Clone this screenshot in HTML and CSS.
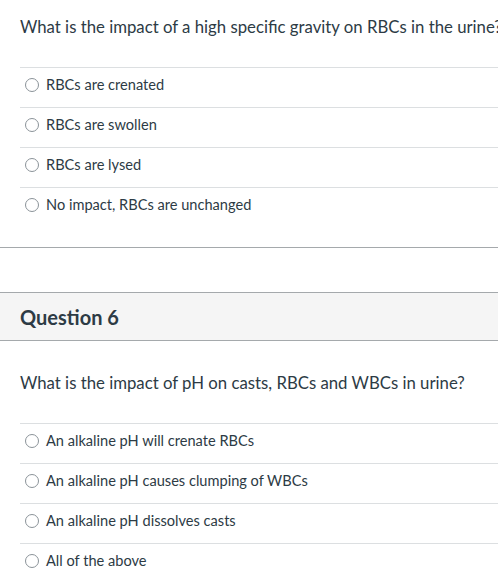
FILE: index.html
```html
<!DOCTYPE html>
<html>
<head>
<meta charset="utf-8">
<link rel="stylesheet" href="styles.css">
</head>
<body>
<div class="page">
  <section class="question">
    <div class="q-body">
      <p class="q-text">What is the impact of a high specific gravity on RBCs in the urine?</p>
      <ul class="answers">
        <li class="answer"><span class="radio"></span><span class="label">RBCs are crenated</span></li>
        <li class="answer"><span class="radio"></span><span class="label">RBCs are swollen</span></li>
        <li class="answer"><span class="radio"></span><span class="label">RBCs are lysed</span></li>
        <li class="answer"><span class="radio"></span><span class="label">No impact, RBCs are unchanged</span></li>
      </ul>
    </div>
    <div class="q-end"></div>
  </section>

  <section class="question second">
    <header class="q-header"><h2>Question 6</h2></header>
    <div class="q-body">
      <p class="q-text">What is the impact of pH on casts, RBCs and WBCs in urine?</p>
      <ul class="answers">
        <li class="answer"><span class="radio"></span><span class="label">An alkaline pH will crenate RBCs</span></li>
        <li class="answer"><span class="radio"></span><span class="label">An alkaline pH causes clumping of WBCs</span></li>
        <li class="answer"><span class="radio"></span><span class="label">An alkaline pH dissolves casts</span></li>
        <li class="answer"><span class="radio"></span><span class="label">All of the above</span></li>
      </ul>
    </div>
  </section>
</div>
</body>
</html>
```

FILE: styles.css
```css
html, body {
  margin: 0;
  padding: 0;
  overflow: hidden;
  background: #ffffff;
}
body {
  font-family: Lato, "Open Sans", sans-serif;
  color: #2d3b45;
}
.page {
  width: 520px;
}
.q-body {
  padding-left: 20px;
}
.q-text {
  margin: 0;
  padding-top: 15px;
  font-size: 16.75px;
  line-height: 24px;
  white-space: nowrap;
}
.answers {
  list-style: none;
  margin: 28px 0 0 0;
  padding: 0;
}
.answer {
  display: flex;
  align-items: center;
  gap: 7px;
  border-top: 1px solid #dcdfe1;
  padding: 7px 0 12px 5px;
  font-size: 14.6px;
  line-height: 20px;
}
.radio {
  width: 12px;
  height: 12px;
  border: 1px solid #8b9399;
  border-radius: 50%;
  flex: none;
}
.q-end {
  margin-top: 20px;
  border-top: 1px solid #a5a9ac;
}
.second {
  margin-top: 44px;
}
.q-header {
  background: #f5f5f5;
  border-top: 1px solid #a5a9ac;
  border-bottom: 1px solid #a5a9ac;
  height: 47px;
  display: flex;
  align-items: center;
  padding-left: 20px;
}
.q-header h2 {
  margin: 0;
  font-size: 20px;
  font-weight: 700;
  line-height: 24px;
}
.second .q-text {
  padding-top: 30px;
}
.second .answers {
  margin-top: 28px;
}
```
